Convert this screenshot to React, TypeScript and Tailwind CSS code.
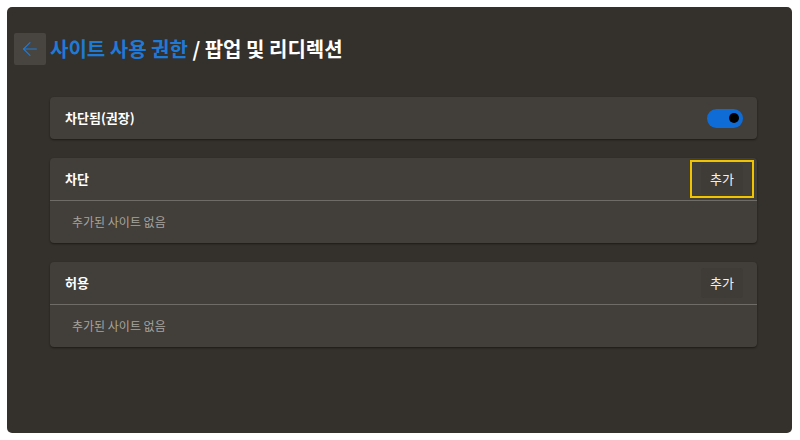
import { ArrowLeft } from "lucide-react";

const font = { fontFamily: '"Noto Sans CJK KR", "Noto Sans", sans-serif' };

function Toggle() {
  return (
    <div className="flex h-[19px] w-[36px] items-center justify-end rounded-full bg-[#0f6cd6] pr-[4px]">
      <span className="size-[10px] rounded-full bg-black" />
    </div>
  );
}

function AddButton({ focused }: { focused?: boolean }) {
  return (
    <button className="relative flex h-[30px] w-[42px] items-center justify-center rounded-[3px] bg-[#3f3b36] text-[13px] text-[#f2f0ed]">
      추가
      {focused && (
        <span className="pointer-events-none absolute -inset-x-[11px] -inset-y-[4px] border-2 border-[#f2c400]" />
      )}
    </button>
  );
}

function SiteList({ title, focused }: { title: string; focused?: boolean }) {
  return (
    <section className="rounded-[4px] bg-[#423e39] shadow-[0_1px_2px_rgba(0,0,0,0.45)]">
      <div className="flex h-[43px] items-center justify-between border-b border-[#6f6b66] pl-[15px] pr-[14px]">
        <h2 className="text-[13px] font-bold text-white">{title}</h2>
        <AddButton focused={focused} />
      </div>
      <div className="flex h-[42px] items-center pl-[22px] text-[12px] text-[#a7a39e]">
        추가된 사이트 없음
      </div>
    </section>
  );
}

export default function App() {
  return (
    <div className="h-[440px] w-[800px] bg-white pb-[7px] pl-[7px] pr-[8px] pt-[7px]" style={font}>
      <div className="h-full rounded-[5px] bg-[#34302b] pl-[7px] pt-[26px]">
        <div className="flex items-center gap-[4px]">
          <button className="flex size-[32px] items-center justify-center rounded-[2px] bg-[#48443f] text-[#1f7ad6]">
            <ArrowLeft size={22} strokeWidth={1.2} />
          </button>
          <h1 className="text-[20px] font-bold leading-none text-white">
            <span className="text-[#1f7ad6]">사이트 사용 권한</span> / 팝업 및 리디렉션
          </h1>
        </div>
        <div className="mt-[32px] flex flex-col gap-[19px] pl-[36px] pr-[35px]">
          <section className="flex h-[42px] items-center justify-between rounded-[4px] bg-[#423e39] pl-[15px] pr-[14px] shadow-[0_1px_2px_rgba(0,0,0,0.45)]">
            <h2 className="text-[13px] font-bold text-white">차단됨(권장)</h2>
            <Toggle />
          </section>
          <SiteList title="차단" focused />
          <SiteList title="허용" />
        </div>
      </div>
    </div>
  );
}
